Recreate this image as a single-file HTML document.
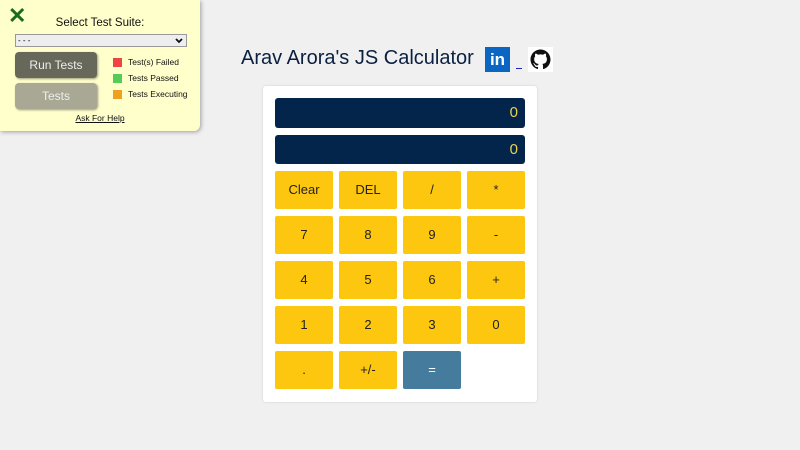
<!DOCTYPE html>
<html><head><style>
body{margin:0;width:800px;height:450px;background:#f0f0f0;font-family:"Liberation Sans",sans-serif;position:relative;overflow:hidden}
.panel{position:absolute;left:0;top:0;width:200px;height:131px;background:#ffffcc;box-shadow:1px 1px 4px rgba(0,0,0,.35);border-radius:0 0 6px 0}
.x{position:absolute;left:8px;top:3px;font-size:22px;font-weight:bold;color:#1a6b1a}
.st{position:absolute;left:0;width:200px;top:17px;text-align:center;font-size:11.5px;color:#111}
.sel{position:absolute;left:15px;top:34px;width:168px;height:11px;border:1px solid #999;background:#eee;font-size:8px;line-height:11px;padding-left:2px}
.sel svg{position:absolute;right:3px;top:3px}
.b{position:absolute;left:15px;width:82px;height:26px;border-radius:4px;color:#eee;font-size:12px;text-align:center;line-height:26px;box-shadow:1px 1px 2px rgba(0,0,0,.4)}
.leg{position:absolute;left:113px;font-size:8.5px;color:#111}
.leg i{display:inline-block;width:9px;height:9px;vertical-align:middle;margin-right:6px}
.help{position:absolute;left:0;width:200px;top:113px;text-align:center;font-size:8.5px;text-decoration:underline;color:#111}
h1{position:absolute;left:241px;top:47px;margin:0;font-weight:normal;font-size:20px;color:#0b2040}
.card{position:absolute;left:263px;top:86px;width:274px;height:316px;background:#fff;border-radius:3px;box-shadow:0 0 2px rgba(0,0,0,.15)}
.d{position:absolute;left:12px;width:250px;background:#03254c;border-radius:3px;color:#e8d44d;font-size:15px;text-align:right;box-sizing:border-box;padding-right:7px}
.k{position:absolute;width:58px;height:38px;background:#fdc70f;border-radius:2px;font-size:13px;color:#222;text-align:center;line-height:38px}
</style></head><body>
<div class="panel">
<div class="x">✕</div>
<div class="st">Select Test Suite:</div>
<div class="sel">- - -<svg width="8" height="6" viewBox="0 0 8 6"><path d="M1 1l3 3 3-3" stroke="#111" stroke-width="1.8" fill="none"/></svg></div>
<div class="b" style="top:52px;background:#67675a">Run Tests</div>
<div class="b" style="top:83px;background:#a8a895">Tests</div>
<div class="leg" style="top:57px"><i style="background:#ee4444"></i>Test(s) Failed</div>
<div class="leg" style="top:73px"><i style="background:#55cc55"></i>Tests Passed</div>
<div class="leg" style="top:89px"><i style="background:#f0a020"></i>Tests Executing</div>
<div class="help">Ask For Help</div>
</div>
<h1>Arav Arora's JS Calculator</h1>
<div style="position:absolute;left:485px;top:47px;width:25px;height:25px;background:#0a66c2;color:#fff;font-weight:bold;font-size:17px;text-align:center;line-height:25px">in</div>
<div style="position:absolute;left:516px;top:68px;width:6px;height:1px;background:#22c"></div>
<div style="position:absolute;left:528px;top:47px;width:25px;height:25px;background:#fff">
<svg width="25" height="25" viewBox="0 0 16 16" style="transform:scale(.8)"><path fill="#111" d="M8 0C3.58 0 0 3.58 0 8c0 3.54 2.29 6.530 5.47 7.59.4.07.55-.17.55-.38v-1.34c-2.230.49-2.69-1.07-2.69-1.07-.36-.92-.89-1.17-.89-1.17-.73-.5.06-.49.06-.49.8.06 1.23.83 1.23.83.71 1.23 1.87.87 2.33.67.07-.52.28-.87.51-1.07-1.78-.2-3.64-.89-3.64-3.95 0-.87.31-1.59.82-2.15-.08-.2-.36-1.02.08-2.12 0 0 .67-.21 2.2.82a7.6 7.6 0 014 0c1.53-1.04 2.2-.82 2.2-.82.44 1.1.16 1.92.08 2.12.51.56.82 1.27.82 2.15 0 3.07-1.87 3.75-3.65 3.95.29.25.54.73.54 1.48v2.2c0 .21.15.46.55.38A8 8 0 0016 8c0-4.42-3.58-8-8-8z"/></svg></div>
<div class="card">
<div class="d" style="top:12px;height:30px;line-height:30px">0</div>
<div class="d" style="top:49px;height:29px;line-height:29px">0</div>
<div class="k" style="left:12px;top:85px">Clear</div>
<div class="k" style="left:76px;top:85px">DEL</div>
<div class="k" style="left:140px;top:85px">/</div>
<div class="k" style="left:204px;top:85px">*</div>
<div class="k" style="left:12px;top:130px">7</div>
<div class="k" style="left:76px;top:130px">8</div>
<div class="k" style="left:140px;top:130px">9</div>
<div class="k" style="left:204px;top:130px">-</div>
<div class="k" style="left:12px;top:175px">4</div>
<div class="k" style="left:76px;top:175px">5</div>
<div class="k" style="left:140px;top:175px">6</div>
<div class="k" style="left:204px;top:175px">+</div>
<div class="k" style="left:12px;top:220px">1</div>
<div class="k" style="left:76px;top:220px">2</div>
<div class="k" style="left:140px;top:220px">3</div>
<div class="k" style="left:204px;top:220px">0</div>
<div class="k" style="left:12px;top:265px">.</div>
<div class="k" style="left:76px;top:265px">+/-</div>
<div class="k" style="left:140px;top:265px;background:#457b9d;color:#fff">=</div>
</div>
</body></html>
